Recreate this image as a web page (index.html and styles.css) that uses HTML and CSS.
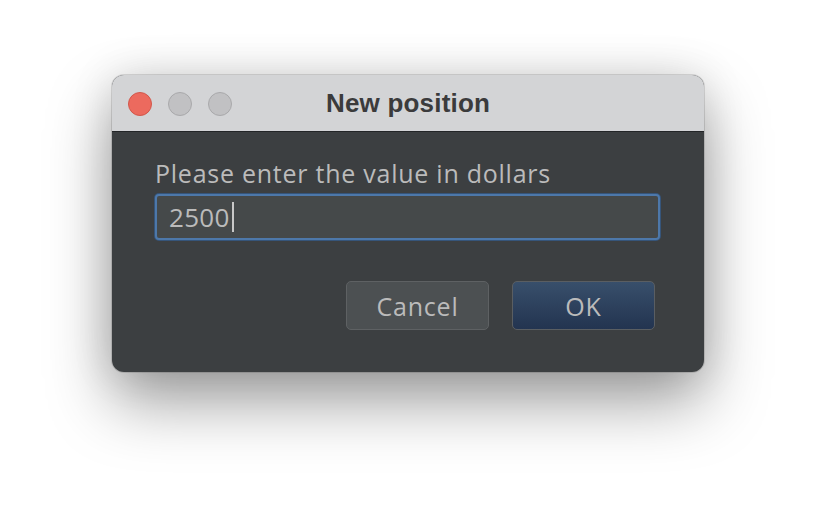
FILE: index.html
```html
<!DOCTYPE html>
<html>
<head>
<meta charset="utf-8">
<link rel="stylesheet" href="styles.css">
</head>
<body>
<div class="window">
  <div class="titlebar">
    <div class="lights">
      <span class="light close"></span>
      <span class="light"></span>
      <span class="light"></span>
    </div>
    <div class="title">New position</div>
  </div>
  <div class="content">
    <div class="label">Please enter the value in dollars</div>
    <div class="field"><span class="value">2500</span><span class="caret"></span></div>
    <div class="actions">
      <div class="btn cancel">Cancel</div>
      <div class="btn ok">OK</div>
    </div>
  </div>
</div>
</body>
</html>
```
FILE: styles.css
```css
html, body {
  margin: 0;
  padding: 0;
  background: #ffffff;
  width: 816px;
  height: 520px;
  overflow: hidden;
}
.window {
  width: 592px;
  height: 297px;
  margin: 75px auto 0;
  border-radius: 12px;
  overflow: hidden;
  background: #3c3f41;
  box-shadow: 0 0 0 1px rgba(0,0,0,0.12), 0 30px 64px rgba(0,0,0,0.38), 0 0 44px rgba(0,0,0,0.12);
  display: flex;
  flex-direction: column;
}
.titlebar {
  height: 56px;
  background: #d3d4d6;
  border-bottom: 1px solid #232527;
  display: flex;
  align-items: center;
  justify-content: center;
  position: relative;
  flex: none;
}
.lights {
  position: absolute;
  left: 16px;
  top: 17px;
  display: flex;
  gap: 16px;
}
.light {
  width: 22px;
  height: 22px;
  border-radius: 50%;
  background: #c1c1c3;
  border: 1px solid #a9a9ab;
}
.light.close {
  background: #ec6a5e;
  border-color: #d2574b;
}
.title {
  font-family: "Liberation Sans", Arial, sans-serif;
  font-weight: bold;
  font-size: 26px;
  color: #3b3b3c;
  margin-top: 1px;
  letter-spacing: 0.2px;
}
.content {
  flex: 1;
  padding: 24px 44px 0 43px;
  display: flex;
  flex-direction: column;
  font-family: "Open Sans", sans-serif;
  color: #bbbbbb;
}
.label {
  font-size: 25px;
  line-height: 34px;
  letter-spacing: 0.75px;
}
.field {
  margin-top: 4px;
  height: 42px;
  border: 2px solid #4d78aa;
  box-shadow: 0 0 0 1px #36557a;
  border-radius: 4px;
  background: #45494a;
  display: flex;
  align-items: center;
  padding-left: 12px;
  font-size: 26px;
  letter-spacing: 0.3px;
}
.caret {
  width: 2px;
  height: 30px;
  background: #c8c8c8;
  margin-left: 2px;
}
.actions {
  margin-top: 41px;
  display: flex;
  justify-content: flex-end;
  gap: 23px;
  padding-right: 5px;
}
.btn {
  width: 141px;
  height: 47px;
  border: 1px solid #5e6163;
  border-radius: 5px;
  display: flex;
  align-items: center;
  justify-content: center;
  font-size: 25px;
  letter-spacing: 0.8px;
  color: #bbbbbb;
}
.cancel {
  background: #4c5052;
}
.ok {
  background: linear-gradient(#384f6b, #233450);
  border-color: #5a5e62;
}
```
